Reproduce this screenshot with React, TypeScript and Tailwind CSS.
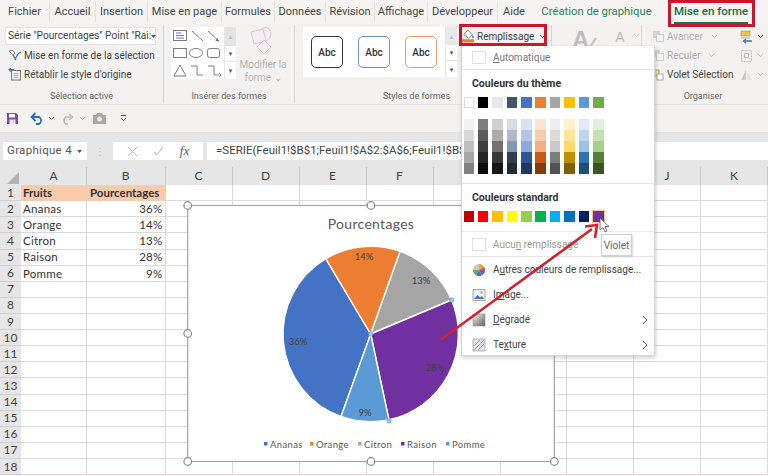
import React from "react";

const tabs: [string, number][] = [
  ["Fichier", 49], ["Accueil", 46], ["Insertion", 52], ["Mise en page", 74], ["Formules", 53],
  ["Données", 51], ["Révision", 49], ["Affichage", 53], ["Développeur", 70], ["Aide", 33],
];
const themeBase = ["#ffffff","#000000","#e7e6e6","#44546a","#4472c4","#ed7d31","#a5a5a5","#ffc000","#5b9bd5","#70ad47"];
const themeShades = [
  ["#f2f2f2","#d9d9d9","#bfbfbf","#a6a6a6","#808080"],
  ["#7f7f7f","#595959","#404040","#262626","#0d0d0d"],
  ["#d0cece","#afabab","#767171","#3a3838","#181717"],
  ["#d6dce5","#adb9ca","#8497b0","#333f50","#222a35"],
  ["#d9e2f3","#b4c6e7","#8eaadb","#2f5496","#1f3864"],
  ["#fbe4d5","#f7caac","#f4b083","#c55a11","#833c0b"],
  ["#ededed","#dbdbdb","#c9c9c9","#7b7b7b","#525252"],
  ["#fff2cc","#fee599","#ffd966","#bf8f00","#7f6000"],
  ["#deeaf6","#bdd6ee","#9cc2e5","#2e74b5","#1f4e79"],
  ["#e2efd9","#c5e0b3","#a8d08d","#538135","#375623"],
];
const standard = ["#c00000","#ff0000","#ffc000","#ffff00","#92d050","#00b050","#00b0f0","#0070c0","#002060","#7030a0"];
const cols = ["A","B","C","D","E","F","G","H","I","J","K"];
const data: Record<number,[string,string]> = {
  1:["Fruits","Pourcentages"],2:["Ananas","36%"],3:["Orange","14%"],4:["Citron","13%"],5:["Raison","28%"],6:["Pomme","9%"],
};

const Caret = ({ color = "#666" }: { color?: string }) => (
  <svg width="7" height="5" viewBox="0 0 7 5" className="shrink-0"><path d="M1 1l2.5 2.5L6 1" fill="none" stroke={color} strokeWidth="1" /></svg>
);

const DownTri = () => (
  <svg width="5" height="3" viewBox="0 0 5 3" className="shrink-0"><path d="M0 0h5L2.5 3z" fill="#555" /></svg>
);

const GroupLabel = ({ children, className = "" }: { children: React.ReactNode; className?: string }) => (
  <div className={`mt-auto h-[14px] leading-[14px] text-center text-[9px] text-[#666] whitespace-nowrap ${className}`}>{children}</div>
);

function polar(a: number, r = 87.7) {
  const t = (a * Math.PI) / 180;
  return [370.7 + r * Math.sin(t), 334 - r * Math.cos(t)];
}
function slice(a: number, b: number) {
  const [x1, y1] = polar(a);
  const [x2, y2] = polar(b);
  return `M370.7 334L${x1} ${y1}A87.7 87.7 0 ${b - a > 180 ? 1 : 0} 1 ${x2} ${y2}Z`;
}

const Chart = () => {
  const handles = [[187.7,205.5],[371,205.5],[554.3,205.5],[187.7,333.5],[554.3,333.5],[187.7,461.5],[371,461.5],[554.3,461.5]];
  const slices: [number, number, string][] = [
    [199.8, 329.2, "#4472c4"], [329.2, 379.6, "#ed7d31"], [19.6 + 360, 67.2 + 360, "#a5a5a5"],
    [67.2, 168, "#7030a0"], [168, 199.8, "#5b9bd5"],
  ];
  const labels: [string, number, number][] = [["14%",364,260],["13%",421,284],["36%",298,345],["28%",435,371],["9%",365,416]];
  const legend: [string, string, number][] = [["Ananas","#4472c4",264],["Orange","#ed7d31",310],["Citron","#a5a5a5",358],["Raison","#7030a0",401],["Pomme","#5b9bd5",446]];
  return (
    <svg width="376" height="268" viewBox="183 201 376 268" className="absolute left-[183px] top-[201px] font-['Lato',sans-serif]">
      <rect x="187.7" y="205.5" width="366.6" height="256" fill="#fff" stroke="#a6a6a6" strokeWidth="1.2" />
      <text x="371" y="229" textAnchor="middle" fontSize="14" fill="#595959" letterSpacing="0.3">Pourcentages</text>
      {slices.map(([a, b, c]) => <path key={c} d={slice(a, b)} fill={c} stroke="#fff" strokeWidth="1.4" />)}
      {labels.map(([t, x, y]) => <text key={t} x={x} y={y} textAnchor="middle" fontSize="9.5" fill="#404040">{t}</text>)}
      {legend.map(([t, c, x]) => (
        <g key={t}>
          <rect x={x} y="442" width="3.5" height="3.5" fill={c} />
          <text x={x + 6} y="447.5" fontSize="9.5" fill="#595959" letterSpacing="0.35">{t}</text>
        </g>
      ))}
      {[[451.7,300],[389,421],[370.7,334]].map(([x,y],i) => <circle key={i} cx={x} cy={y} r="2.2" fill="#9cc8ee" stroke="#5b9bd5" strokeWidth="0.6" />)}
      {handles.map(([x,y],i) => <circle key={i} cx={x} cy={y} r="3.8" fill="#fff" stroke="#8a8a8a" strokeWidth="1.2" />)}
    </svg>
  );
};

const Sheet = () => (
  <div className="grid grid-cols-[21px_66px_78.5px_67px_67px_67px_67px_67px_66.5px_67px_67px_67px] auto-rows-[16.11px] font-['Lato',sans-serif] text-[11.5px] text-[#333]">
    <div className="h-[18px] -mt-[2px] bg-[#e6e6e6] flex items-end justify-end pr-[2px] pb-[1px]">
      <svg width="12" height="12" viewBox="0 0 12 12"><path d="M12 0v12H0z" fill="#b4b4b4" /></svg>
    </div>
    {cols.map((c) => (
      <div key={c} className="h-[18px] -mt-[2px] bg-[#e6e6e6] border-r border-[#c6c6c6] flex items-center justify-center text-[12px] text-[#444]">{c}</div>
    ))}
    {Array.from({ length: 18 }, (_, i) => i + 1).map((r) => (
      <React.Fragment key={r}>
        <div className="bg-[#e6e6e6] border-b border-[#d0d0d0] flex items-center justify-center text-[12px] text-[#444]">{r}</div>
        {cols.map((c, i) => {
          const d = data[r];
          const hdr = r === 1 && i < 2;
          return (
            <div key={c} className={`border-r border-b flex items-center overflow-hidden ${r === 1 && i === 1 ? "pl-[3px]" : "px-[2px]"} ${hdr ? "bg-[#f8cbad] font-bold border-[#f8cbad]" : "bg-white border-[#dadada] tracking-[0.25px]"} ${i === 1 && r !== 1 ? "justify-end" : ""}`}>
              {d && i === 0 ? d[0] : d && i === 1 ? d[1] : ""}
            </div>
          );
        })}
      </React.Fragment>
    ))}
  </div>
);

const Swatches = ({ colors, active }: { colors: string[]; active?: number }) => (
  <div className="flex gap-x-[3.9px] pl-[1.5px]">
    {colors.map((c, i) => (
      <div key={c} style={{ backgroundColor: c }} className={`w-[10.5px] h-[11px] ${c === "#ffffff" ? "border border-[#dcdcdc]" : ""} ${active === i ? "outline outline-1 outline-[#f2c48d]" : ""}`} />
    ))}
  </div>
);

const MenuRow = ({ icon, children, chevron }: { icon: React.ReactNode; children: React.ReactNode; chevron?: boolean }) => (
  <div className="flex items-center pl-[10px] pr-[6px] h-[25px]">
    <div className="w-[14px] h-[14px] shrink-0">{icon}</div>
    <div className="ml-[7px] text-[10px] text-[#444] flex-1 whitespace-nowrap">{children}</div>
    {chevron && <svg width="6" height="10" viewBox="0 0 6 10"><path d="M1 1l4 4-4 4" fill="none" stroke="#555" strokeWidth="1" /></svg>}
  </div>
);

const Menu = () => (
  <div className="absolute left-[461px] top-[46px] w-[194px] h-[310px] bg-white border border-t-0 border-[#d4d4d4] shadow-[1px_2px_4px_rgba(0,0,0,0.18)]">
    <div className="h-[24px] flex items-center pl-[10px] border-b border-[#e6e6e6]">
      <div className="w-[14px] h-[13px] border border-[#e0e0e0]" />
      <span className="ml-[7px] text-[10px] text-[#777]"><u>A</u>utomatique</span>
    </div>
    <div className="h-[27px] pt-[1px] flex items-center pl-[10px] text-[10.5px] font-bold text-[#333]">Couleurs du thème</div>
    <Swatches colors={themeBase} />
    <div className="flex gap-x-[3.9px] pl-[1.5px] mt-[11px]">
      {themeShades.map((col, i) => (
        <div key={i} className="flex flex-col">
          {col.map((c) => <div key={c} style={{ backgroundColor: c }} className="w-[10.5px] h-[11px]" />)}
        </div>
      ))}
    </div>
    <div className="h-[10px] border-b border-[#e6e6e6]" />
    <div className="h-[27px] pt-[1px] flex items-center pl-[10px] text-[10.5px] font-bold text-[#333]">Couleurs standard</div>
    <Swatches colors={standard} active={9} />
    <div className="h-[10px] border-b border-[#ececec]" />
    <div className="h-[25px] flex items-center pl-[10px] border-b border-[#e6e6e6]">
      <div className="w-[14px] h-[13px] border border-[#e0e0e0]" />
      <span className="ml-[7px] text-[10px] text-[#999]">Aucu<u>n</u> remplissage</span>
    </div>
    <MenuRow icon={
      <svg viewBox="0 0 14 14"><path d="M7 7V1a6 6 0 0 1 5.2 3z" fill="#e8a33d"/><path d="M7 7l5.2-3A6 6 0 0 1 13 7z" fill="#d9534f"/><path d="M7 7h6a6 6 0 0 1-3 5.2z" fill="#7a5aa6"/><path d="M7 7l3 5.2a6 6 0 0 1-6 0z" fill="#4472c4"/><path d="M7 7l-3 5.2A6 6 0 0 1 1 7z" fill="#6aa84f"/><path d="M7 7H1a6 6 0 0 1 6-6z" fill="#c9c9c9"/></svg>
    }>A<u>u</u>tres couleurs de remplissage...</MenuRow>
    <MenuRow icon={
      <svg viewBox="0 0 14 14"><rect x="1" y="1.5" width="12" height="11" fill="#e9f1f9" stroke="#9a9a9a" strokeWidth="0.8"/><path d="M2 11l3.5-4 2.5 2.5 2-1.5 2 3z" fill="#4472c4"/><circle cx="9.5" cy="4.5" r="1.2" fill="#e8a33d"/></svg>
    }>I<u>m</u>age...</MenuRow>
    <MenuRow chevron icon={
      <svg viewBox="0 0 14 14"><defs><linearGradient id="gr" x1="0" y1="0" x2="1" y2="1"><stop offset="0" stopColor="#f3f3f3"/><stop offset="1" stopColor="#5f5f5f"/></linearGradient></defs><rect x="1" y="1" width="12" height="12" fill="url(#gr)" stroke="#8a8a8a" strokeWidth="0.6"/></svg>
    }><u>D</u>égradé</MenuRow>
    <MenuRow chevron icon={
      <svg viewBox="0 0 14 14"><rect x="1" y="1" width="12" height="12" fill="#dfe6ec" stroke="#8a8a8a" strokeWidth="0.6"/><path d="M2 12L12 2M2 8l6-6M6 12l6-6" stroke="#7f9bb5" strokeWidth="0.9"/></svg>
    }>Te<u>x</u>ture</MenuRow>
  </div>
);

const ShapesIcon = () => (
  <svg width="52" height="52" viewBox="0 0 52 52" fill="none" stroke="#6f6f6f" strokeWidth="0.9">
    <rect x="2.5" y="3.5" width="13" height="10" /><path d="M5 6h5M5 8.5h8M5 11h8" stroke="#4472c4" />
    <path d="M21 4l11 10M37 4l11 10" /><path d="M48 14l-3-.5 1.5-2" fill="#6f6f6f" />
    <rect x="2.5" y="21.5" width="13" height="9" /><ellipse cx="25" cy="26" rx="6.5" ry="4.5" /><rect x="36.5" y="21.5" width="12" height="9" rx="2" />
    <path d="M9 38l6 11H3zM20 39h6v9h6M37 39h6v9h5" /><path d="M48 46l2 2-2 2" />
  </svg>
);

export default function App() {
  return (
    <div className="relative w-[768px] h-[476px] overflow-hidden bg-[#f3f2f1] font-['Roboto',sans-serif] text-[#444]">
      {/* Tabs */}
      <div className="h-[24px] flex items-center text-[11px] text-[#444] bg-[#f5f4f3]">
        {tabs.map(([t, w], i) => (
          <div key={t} style={{ width: w }} className={`h-[20px] flex items-center justify-center shrink-0 ${i > 0 ? "border-l border-[#e4e3e2]" : ""}`}>{t}</div>
        ))}
        <div className="w-[131px] ml-[1px] shrink-0 text-center text-[11.3px] text-[#2f7d58]">Création de graphique</div>
        <div className="relative w-[98px] shrink-0 text-center text-[11.5px] text-[#1f6b47] font-medium">
          Mise en forme
          <div className="absolute left-[12px] right-[12px] -bottom-[3px] h-[2px] bg-[#217346]" />
        </div>
      </div>

      {/* Ribbon */}
      <div className="h-[81px] flex border-b border-[#e2e1e0]">
        <div className="w-[164px] shrink-0 flex flex-col border-r border-[#d6d5d4] my-[1px]">
          <div className="mx-[5px] mt-[2px] w-[151px] h-[18px] bg-white border border-[#e3e3e3] flex items-center justify-between px-[2px] text-[10.2px] text-[#444] whitespace-nowrap">
            <span>Série "Pourcentages" Point "Rai:</span><DownTri />
          </div>
          <div className="flex items-center h-[19px] mt-[1px] pl-[8px] gap-[2px] text-[10px] whitespace-nowrap">
            <svg width="14" height="13" viewBox="0 0 14 13" className="shrink-0"><path d="M1 2l3-1 3 3-2 2z" fill="#fff" stroke="#666" strokeWidth="0.8"/><path d="M5 6l3 5M13 3c-3 1-5 5-6 8" fill="none" stroke="#3b78c4" strokeWidth="1.3"/></svg>
            Mise en forme de la sélection
          </div>
          <div className="flex items-center h-[19px] pl-[8px] gap-[2px] text-[10px] whitespace-nowrap">
            <svg width="14" height="13" viewBox="0 0 14 13" fill="none" className="shrink-0"><rect x="3.5" y="2.5" width="9" height="9.5" stroke="#777"/><path d="M5.5 5.5h5M5.5 7.5h5M5.5 9.5h5" stroke="#999" strokeWidth="0.8"/><path d="M6 1.5H1.5M3 0L1 1.5 3 3.5" stroke="#2a7f8e" strokeWidth="1.2"/></svg>
            Rétablir le style d'origine
          </div>
          <GroupLabel>Sélection active</GroupLabel>
        </div>

        <div className="w-[131px] shrink-0 flex flex-col border-r border-[#d6d5d4] my-[1px]">
          <div className="flex mt-[2px] ml-[7px]">
            <div className="w-[53px] h-[52px] bg-white"><ShapesIcon /></div>
            <div className="w-[12px] h-[52px] flex flex-col bg-white border-l border-[#e6e6e6] text-[#555]">
              <div className="h-[19px] bg-[#e4e4e4] flex items-center justify-center text-[6px] text-[#bbb]">▲</div>
              <div className="h-[15px] flex items-center justify-center text-[6px]">▼</div>
              <div className="h-[18px] flex items-center justify-center text-[6px] border-t border-[#e6e6e6]">▼</div>
            </div>
            <div className="ml-[3px] w-[48px] flex flex-col items-center">
              <svg width="30" height="29" viewBox="0 0 30 29" fill="#f5edf2" stroke="#d9c9d5" strokeWidth="1">
                <path d="M14 2c3-3 9-1 9 4 0 4-3 7-7 10" />
                <path d="M3 5l12-3 3 12-12 3z" />
                <path d="M16 13l7 7-7 7-7-7z" />
              </svg>
              <div className="text-[10px] leading-[13px] text-[#b5b5b5] text-center mt-[2px] whitespace-nowrap">Modifier la<br />forme ⌄</div>
            </div>
          </div>
          <GroupLabel>Insérer des formes</GroupLabel>
        </div>

        <div className="w-[257px] shrink-0 flex flex-col border-r border-[#d6d5d4] my-[1px]">
          <div className="flex items-start">
            <div className="flex mt-[2px] ml-[8px]">
              <div className="w-[142px] h-[50px] bg-white flex items-center gap-[15px] pl-[8px] text-[10px] font-medium text-[#333]">
                <div className="w-[32px] h-[32px] rounded-[5px] border-[1.5px] border-[#333] flex items-center justify-center">Abc</div>
                <div className="w-[32px] h-[32px] rounded-[5px] border-[1.5px] border-[#6f90c8] flex items-center justify-center">Abc</div>
                <div className="w-[32px] h-[32px] rounded-[5px] border-[1.5px] border-[#e89a63] flex items-center justify-center">Abc</div>
              </div>
              <div className="w-[12px] h-[50px] flex flex-col bg-white border-l border-[#e6e6e6]">
                <div className="h-[18px] bg-[#e8e8e8] flex items-center justify-center text-[6px] text-[#bbb]">▲</div>
                <div className="h-[15px] flex items-center justify-center text-[6px] text-[#555]">▼</div>
                <div className="h-[17px] flex items-center justify-center text-[6px] text-[#555] border-t border-[#e6e6e6]">▼</div>
              </div>
            </div>
            <div className="ml-[5px] mt-[2px] h-[18px] flex items-center gap-[2px] text-[10px] text-[#444]">
              <svg width="13" height="14" viewBox="0 0 14 15" className="shrink-0"><path d="M6 1l5 5-4 4-5-4z" fill="#fff" stroke="#666" strokeWidth="0.9"/><path d="M11 6c1 1.5 2 2.500 1.500 3.500S11 10 11 9z" fill="#4472c4"/><rect x="0" y="11" width="13" height="3.5" fill="#ed7d31"/></svg>
              <span className="mr-[3px]">Remplissage</span><Caret />
            </div>
          </div>
          <GroupLabel className="pr-[13px]">Styles de formes</GroupLabel>
        </div>

        <div className="w-[90px] shrink-0 flex border-r border-[#d6d5d4] my-[1px] pl-[20px] pt-[2px] text-[#bdbdbd]">
          <span className="text-[24px] leading-[26px] font-bold font-['Liberation_Sans',sans-serif]">A</span>
          <svg width="8" height="16" viewBox="0 0 8 16" className="mt-[6px]"><path d="M1 14L7 5" stroke="#c8c8c8" strokeWidth="2.5"/></svg>
          <span className="ml-[18px] text-[14px] leading-[20px] font-['Liberation_Sans',sans-serif] text-[#b8b8b8]">A</span>
          <div className="ml-[8px] mt-[6px]"><Caret color="#c8c8c8" /></div>
        </div>

        <div className="flex-1 flex flex-col my-[1px]">
          <div className="flex pl-[10px] pt-[2px] text-[10px]">
            <div className="w-[88px] text-[#b0b0b0]">
              {["Avancer", "Reculer"].map((t) => (
                <div key={t} className="h-[19px] flex items-center">
                  <svg width="13" height="13" viewBox="0 0 13 13" className="shrink-0"><rect x="1" y="1" width="7" height="7" fill="#d4d4d4"/><rect x="4.5" y="4.5" width="7" height="7" fill="#f4f4f4" stroke="#cfcfcf"/></svg>
                  <span className="ml-[2px] mr-[8px]">{t}</span><Caret color="#bbb" />
                </div>
              ))}
              <div className="h-[19px] flex items-center text-[#444] whitespace-nowrap">
                <svg width="13" height="13" viewBox="0 0 13 13" className="shrink-0"><rect x="1" y="2" width="6" height="6" fill="#f1d9a5" stroke="#b38a3c" strokeWidth="0.7"/><rect x="5" y="6" width="6" height="6" fill="#fff" stroke="#888" strokeWidth="0.7"/></svg>
                <span className="ml-[2px]">Volet Sélection</span>
              </div>
            </div>
            <div className="flex flex-col">
              <div className="h-[19px] flex items-center gap-[4px]">
                <svg width="13" height="14" viewBox="0 0 13 14"><rect x="1" y="1" width="9" height="5" fill="#f2c14e" stroke="#b58a20" strokeWidth="0.5"/><rect x="1" y="7" width="9" height="2" fill="#d0d0d0"/><path d="M12 11H4M6 9l-2.5 2L6 13" fill="none" stroke="#3f78bf" strokeWidth="1.3"/></svg>
                <Caret color="#444" />
              </div>
              <div className="h-[19px] flex items-center gap-[4px]">
                <svg width="13" height="14" viewBox="0 0 13 14" fill="none" stroke="#bdbdbd"><rect x="1.5" y="1.5" width="10" height="11" strokeDasharray="2 1"/><rect x="4.5" y="4.5" width="4" height="4"/></svg>
                <Caret color="#bbb" />
              </div>
              <div className="h-[19px] flex items-center gap-[4px]">
                <svg width="13" height="14" viewBox="0 0 13 14"><path d="M6 2v10H1z" fill="#c9c9c9"/><path d="M7.5 4l4.500 8H7.5z" fill="#e2e2e2"/></svg>
                <Caret color="#bbb" />
              </div>
            </div>
          </div>
          <GroupLabel className="pr-[4px]">Organiser</GroupLabel>
        </div>
      </div>

      {/* Quick access */}
      <div className="h-[28px] flex items-center pl-[7px] border-b border-[#dedede]">
        <svg width="11" height="11" viewBox="0 0 11 11"><path d="M0 0h9l2 2v9H0z" fill="#7a4f9e"/><rect x="2" y="1" width="6" height="3.5" fill="#fff"/><rect x="2.5" y="6.5" width="6" height="4.5" fill="#e9e1f0"/></svg>
        <svg width="14" height="13" viewBox="0 0 14 13" className="ml-[12px]" fill="none"><path d="M3 5h6a4 4 0 0 1 0 7H6" stroke="#2b6cb8" strokeWidth="1.8"/><path d="M5.5 1L1.5 5l4 4" stroke="#2b6cb8" strokeWidth="1.8"/></svg>
        <div className="ml-[4px]"><Caret /></div>
        <svg width="13" height="12" viewBox="0 0 13 12" className="ml-[6px]" fill="none"><path d="M10 4H5a4 4 0 0 0 0 7h2" stroke="#bcbcbc" strokeWidth="1.5"/><path d="M8 1l3.5 3L8 7" stroke="#bcbcbc" strokeWidth="1.5"/></svg>
        <div className="ml-[5px]"><Caret color="#bbb" /></div>
        <svg width="13" height="11" viewBox="0 0 13 11" className="ml-[7px]"><path d="M0 2h3l1-2h5l1 2h3v9H0z" fill="#a8a8a8"/><circle cx="6.5" cy="6" r="2.5" fill="#e8e8e8"/></svg>
        <div className="ml-[14px] flex flex-col items-center gap-[1px]"><div className="w-[5px] h-[1px] bg-[#555]" /><Caret color="#555" /></div>
      </div>
      <div className="h-[9px] bg-[#e6e6e6]" />

      {/* Formula bar */}
      <div className="h-[18px] flex bg-[#e6e6e6]">
        <div className="ml-[3px] w-[84px] bg-white flex items-center justify-between pl-[4px] pr-[5px] text-[11.5px] text-[#555] tracking-[0.3px] whitespace-nowrap">
          Graphique 4 <DownTri />
        </div>
        <div className="w-[26px] flex items-center justify-center text-[#bbb] text-[10px]">⋮</div>
        <div className="w-[90px] bg-white flex items-center justify-around px-[6px]">
          <svg width="11" height="11" viewBox="0 0 11 11"><path d="M1 1l9 9M10 1l-9 9" stroke="#bdbdbd" strokeWidth="1"/></svg>
          <svg width="11" height="11" viewBox="0 0 11 11"><path d="M1 6l3 3 6-8" fill="none" stroke="#bdbdbd" strokeWidth="1"/></svg>
          <span className="font-['Liberation_Serif',serif] italic text-[13px] text-[#555]">fx</span>
        </div>
        <div className="ml-[4px] flex-1 bg-white flex items-center pl-[9px] text-[11.5px] text-[#444] whitespace-nowrap overflow-hidden">
          =SERIE(Feuil1!$B$1;Feuil1!$A$2:$A$6;Feuil1!$B$2:$B$6;4)
        </div>
      </div>

      {/* Sheet */}
      <div className="h-[7px] bg-[#e6e6e6]" />
      <div className="pt-[2px] bg-[#e6e6e6]"><Sheet /></div>

      <Chart />
      <Menu />

      {/* Red callouts */}
      <div className="absolute left-[459px] top-[24px] w-[88px] h-[22px] border-[3px] border-[#c8162c]" />
      <div className="absolute left-[668px] top-0 w-[87px] h-[27px] border-[3px] border-[#c8162c]" />

      {/* Tooltip */}
      <div className="absolute left-[601px] top-[234px] w-[31px] h-[22px] bg-white border border-[#d0d0d0] shadow-[1px_1px_2px_rgba(0,0,0,0.15)] flex items-center justify-center text-[10px] text-[#666]">Violet</div>

      {/* Arrow + cursor */}
      <svg width="768" height="476" viewBox="0 0 768 476" className="absolute inset-0 pointer-events-none">
        <path d="M441 339.5L592 229" stroke="#d2202f" strokeWidth="2.6" fill="none" />
        <path d="M585 226.5L597 225L595 238" stroke="#d2202f" strokeWidth="2.6" fill="none" />
        <path d="M600 218v12l3-2.5 2 4.5 2-1-2-4.5h4z" fill="#fff" stroke="#555" strokeWidth="0.8" />
      </svg>
    </div>
  );
}
